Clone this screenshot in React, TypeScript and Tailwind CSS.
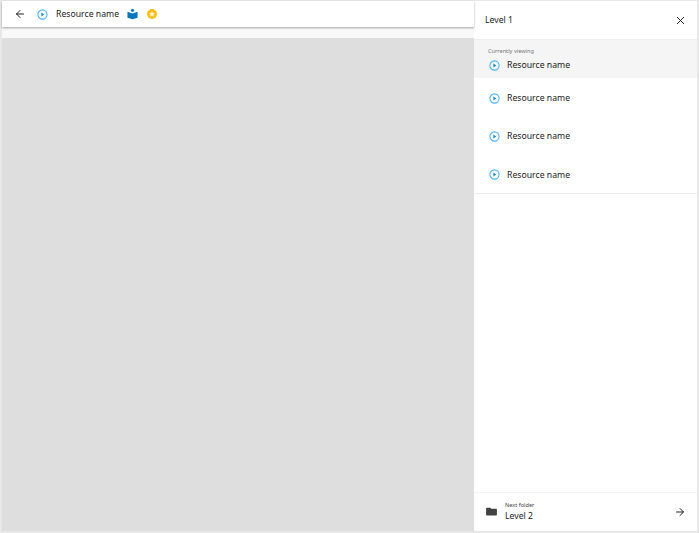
import React from 'react';
import { ArrowLeft, ArrowRight, X } from 'lucide-react';

const PlayIcon = () => (
  <svg width="11" height="11" viewBox="0 0 12 12" className="shrink-0">
    <circle cx="6" cy="6" r="5" fill="none" stroke="#4db6f5" strokeWidth="1.2" />
    <path d="M4.8 3.7 L8 6 L4.8 8.3 Z" fill="#1e88c9" />
  </svg>
);

const BookIcon = () => (
  <svg width="11" height="12" viewBox="0 0 12 12" className="shrink-0">
    <circle cx="6" cy="2" r="1.7" fill="#0277bd" />
    <path d="M0.5 3.6 L6 5.4 L11.5 3.6 V10 L6 11.8 L0.5 10 Z" fill="#0277bd" />
  </svg>
);

const StarBadge = () => (
  <svg width="10" height="10" viewBox="0 0 11 11" className="shrink-0">
    <circle cx="5.5" cy="5.5" r="5.4" fill="#fbbc13" />
    <path d="M5.5 2.2 L6.5 4.3 L8.8 4.5 L7.1 6.1 L7.6 8.5 L5.5 7.3 L3.4 8.5 L3.9 6.1 L2.2 4.5 L4.5 4.3 Z" fill="#fff3c8" />
  </svg>
);

const FolderIcon = () => (
  <svg width="11" height="9" viewBox="0 0 12 10" className="shrink-0">
    <path d="M1 0.8 H4.6 L5.8 2 H11 A0.9 0.9 0 0 1 12 2.9 V8.6 A0.9 0.9 0 0 1 11 9.5 H1 A0.9 0.9 0 0 1 0 8.6 V1.8 A1 1 0 0 1 1 0.8 Z" fill="#424242" />
  </svg>
);

const ResourceRow = ({ className }: { className: string }) => (
  <div className={`flex items-center gap-[7px] pl-[15px] ${className}`}>
    <PlayIcon />
    <span className="text-[8.7px] leading-[14px] text-[#212121]">Resource name</span>
  </div>
);

export default function App() {
  return (
    <div className="w-[699px] h-[533px] bg-[#e8e8e8] flex pl-[2px] pt-[1px] pb-[2px] pr-[2px] overflow-hidden font-['Noto_Sans','Open_Sans',sans-serif]">
      {/* Viewer */}
      <div className="w-[472px] flex flex-col bg-[#dedede]">
        <div className="h-[26px] bg-white shadow-[0_1px_2px_rgba(0,0,0,0.35)] flex items-center pl-[12px] z-10">
          <ArrowLeft size={12} strokeWidth={2} color="#212121" className="shrink-0" />
          <span className="ml-[11px]"><PlayIcon /></span>
          <span className="ml-[8px] mt-[1px] text-[8.7px] text-[#212121]">Resource name</span>
          <span className="ml-[8px]"><BookIcon /></span>
          <span className="ml-[9px]"><StarBadge /></span>
        </div>
        <div className="h-[11px] bg-[#f9f9f9]" />
        <div className="flex-1 bg-[#dedede]" />
      </div>

      {/* Side panel */}
      <div className="w-[223px] flex flex-col bg-white">
        <div className="h-[39px] flex items-center justify-between pl-[11px] pr-[10px] border-b border-[#eeeeee]">
          <span className="mt-[1px] text-[8.7px] text-[#212121]">Level 1</span>
          <X size={13} strokeWidth={1.8} color="#212121" />
        </div>
        <div className="h-[38px] bg-[#f5f5f5] pt-[7px]">
          <div className="pl-[14px] text-[5.6px] leading-[9px] text-[#757575]">Currently viewing</div>
          <ResourceRow className="h-[16px] mt-[1px]" />
        </div>
        <div className="border-b border-[#eeeeee] pt-[1px]">
          <ResourceRow className="h-[38px]" />
          <ResourceRow className="h-[38.5px]" />
          <ResourceRow className="h-[37.5px] pt-[1px]" />
        </div>
        <div className="flex-1" />
        <div className="h-[39px] border-t border-[#f5f5f5] flex items-center pl-[12px] pr-[11px] pb-[1px]">
          <FolderIcon />
          <div className="ml-[8px] flex-1">
            <div className="text-[5.6px] leading-[8px] text-[#424242]">Next folder</div>
            <div className="mt-[1px] text-[8.7px] leading-[13px] text-[#212121]">Level 2</div>
          </div>
          <ArrowRight size={12} strokeWidth={2} color="#212121" />
        </div>
      </div>
    </div>
  );
}
